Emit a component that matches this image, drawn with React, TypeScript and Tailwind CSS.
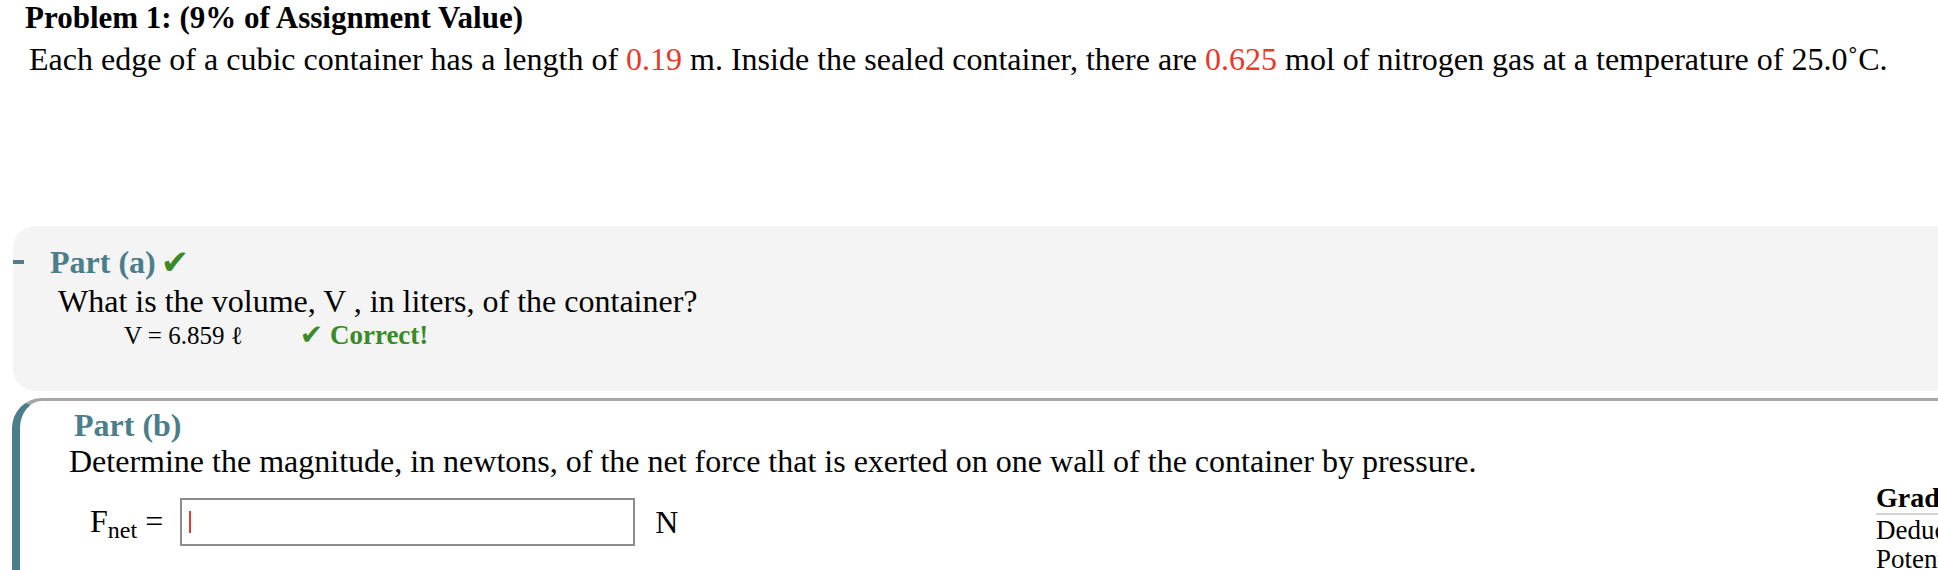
import React from 'react';

const serif = { fontFamily: '"Liberation Serif", "Times New Roman", serif' };
const glyph = { fontFamily: '"DejaVu Sans", sans-serif' };

const GradeSummary: React.FC = () => {
  return (
    <div className="w-[260px] shrink-0 mt-[82px] whitespace-nowrap">
      <div className="text-[28px] leading-[30px] font-bold border-b-2 border-[#d4d4d4]">Grade Summary</div>
      <div className="mt-[1px] text-[27px] leading-[29px]">Deductions</div>
      <div className="text-[27px] leading-[29px]">Potential</div>
    </div>
  );
};

const PartA: React.FC = () => {
  return (
    <div className="ml-[13px] rounded-l-[22px] bg-[#f4f4f4] pt-[18px] pb-[40px]">
      <div className="flex items-center h-[36px]">
        <span className="w-[11px] h-[4px] bg-[#557b88] shrink-0" />
        <span className="ml-[26px] text-[32px] leading-[36px] font-bold text-[#4b7d8a]">Part (a)</span>
        <span className="ml-[5px] text-[34px] leading-[36px] text-[#3a8a28]" style={glyph}>✔</span>
      </div>
      <div className="mt-[3px] ml-[45px] text-[32px] leading-[36px] whitespace-nowrap">
        What is the volume, V , in liters, of the container?
      </div>
      <div className="mt-[1px] ml-[111px] flex items-baseline text-[25px] leading-[30px]">
        <span>V = 6.859 ℓ</span>
        <span className="ml-[57px] text-[27px] font-bold text-[#3a8a28]">
          <span className="text-[28px]" style={glyph}>✔</span> Correct!
        </span>
      </div>
    </div>
  );
};

const PartB: React.FC = () => {
  return (
    <div className="ml-[12px] mt-[7px] flex overflow-hidden border-t-[3px] border-l-[8px] border-t-[#a6a6a6] border-l-[#4b7d8a] rounded-tl-[30px]">
      <div className="w-[1856px] shrink-0 pl-[49px] pt-[6px]">
        <div className="ml-[5px] text-[32px] leading-[36px] font-bold text-[#4b7d8a]">Part (b)</div>
        <div className="text-[32px] leading-[36px] whitespace-nowrap">
          Determine the magnitude, in newtons, of the net force that is exerted on one wall of the container by pressure.
        </div>
        <div className="mt-[19px] ml-[21px] flex items-center">
          <span className="text-[32px] leading-[36px] whitespace-nowrap">
            F<span className="relative top-[6px] text-[24px]">net</span> =
          </span>
          <div className="ml-[17px] w-[455px] h-[48px] border-2 border-[#8c8c8c] bg-white flex items-center pl-[7px]">
            <span className="w-[2px] h-[22px] bg-[#e8392b]" />
          </div>
          <span className="ml-[20px] text-[32px] leading-[36px]">N</span>
        </div>
      </div>
      <GradeSummary />
    </div>
  );
};

export default function App() {
  return (
    <div className="w-full h-[570px] overflow-hidden bg-white text-black" style={serif}>
      <div className="pl-[25px] pt-[1px] text-[31px] leading-[34px] font-bold whitespace-nowrap">
        Problem 1: (9% of Assignment Value)
      </div>
      <div className="mt-[6px] pl-[29px] text-[32px] leading-[36px] whitespace-nowrap">
        Each edge of a cubic container has a length of <span className="text-[#e8392b]">0.19</span> m. Inside the sealed
        container, there are <span className="text-[#e8392b]">0.625</span> mol of nitrogen gas at a temperature of
        25.0˚C.
      </div>
      <div className="h-[149px]" />
      <PartA />
      <PartB />
    </div>
  );
}
